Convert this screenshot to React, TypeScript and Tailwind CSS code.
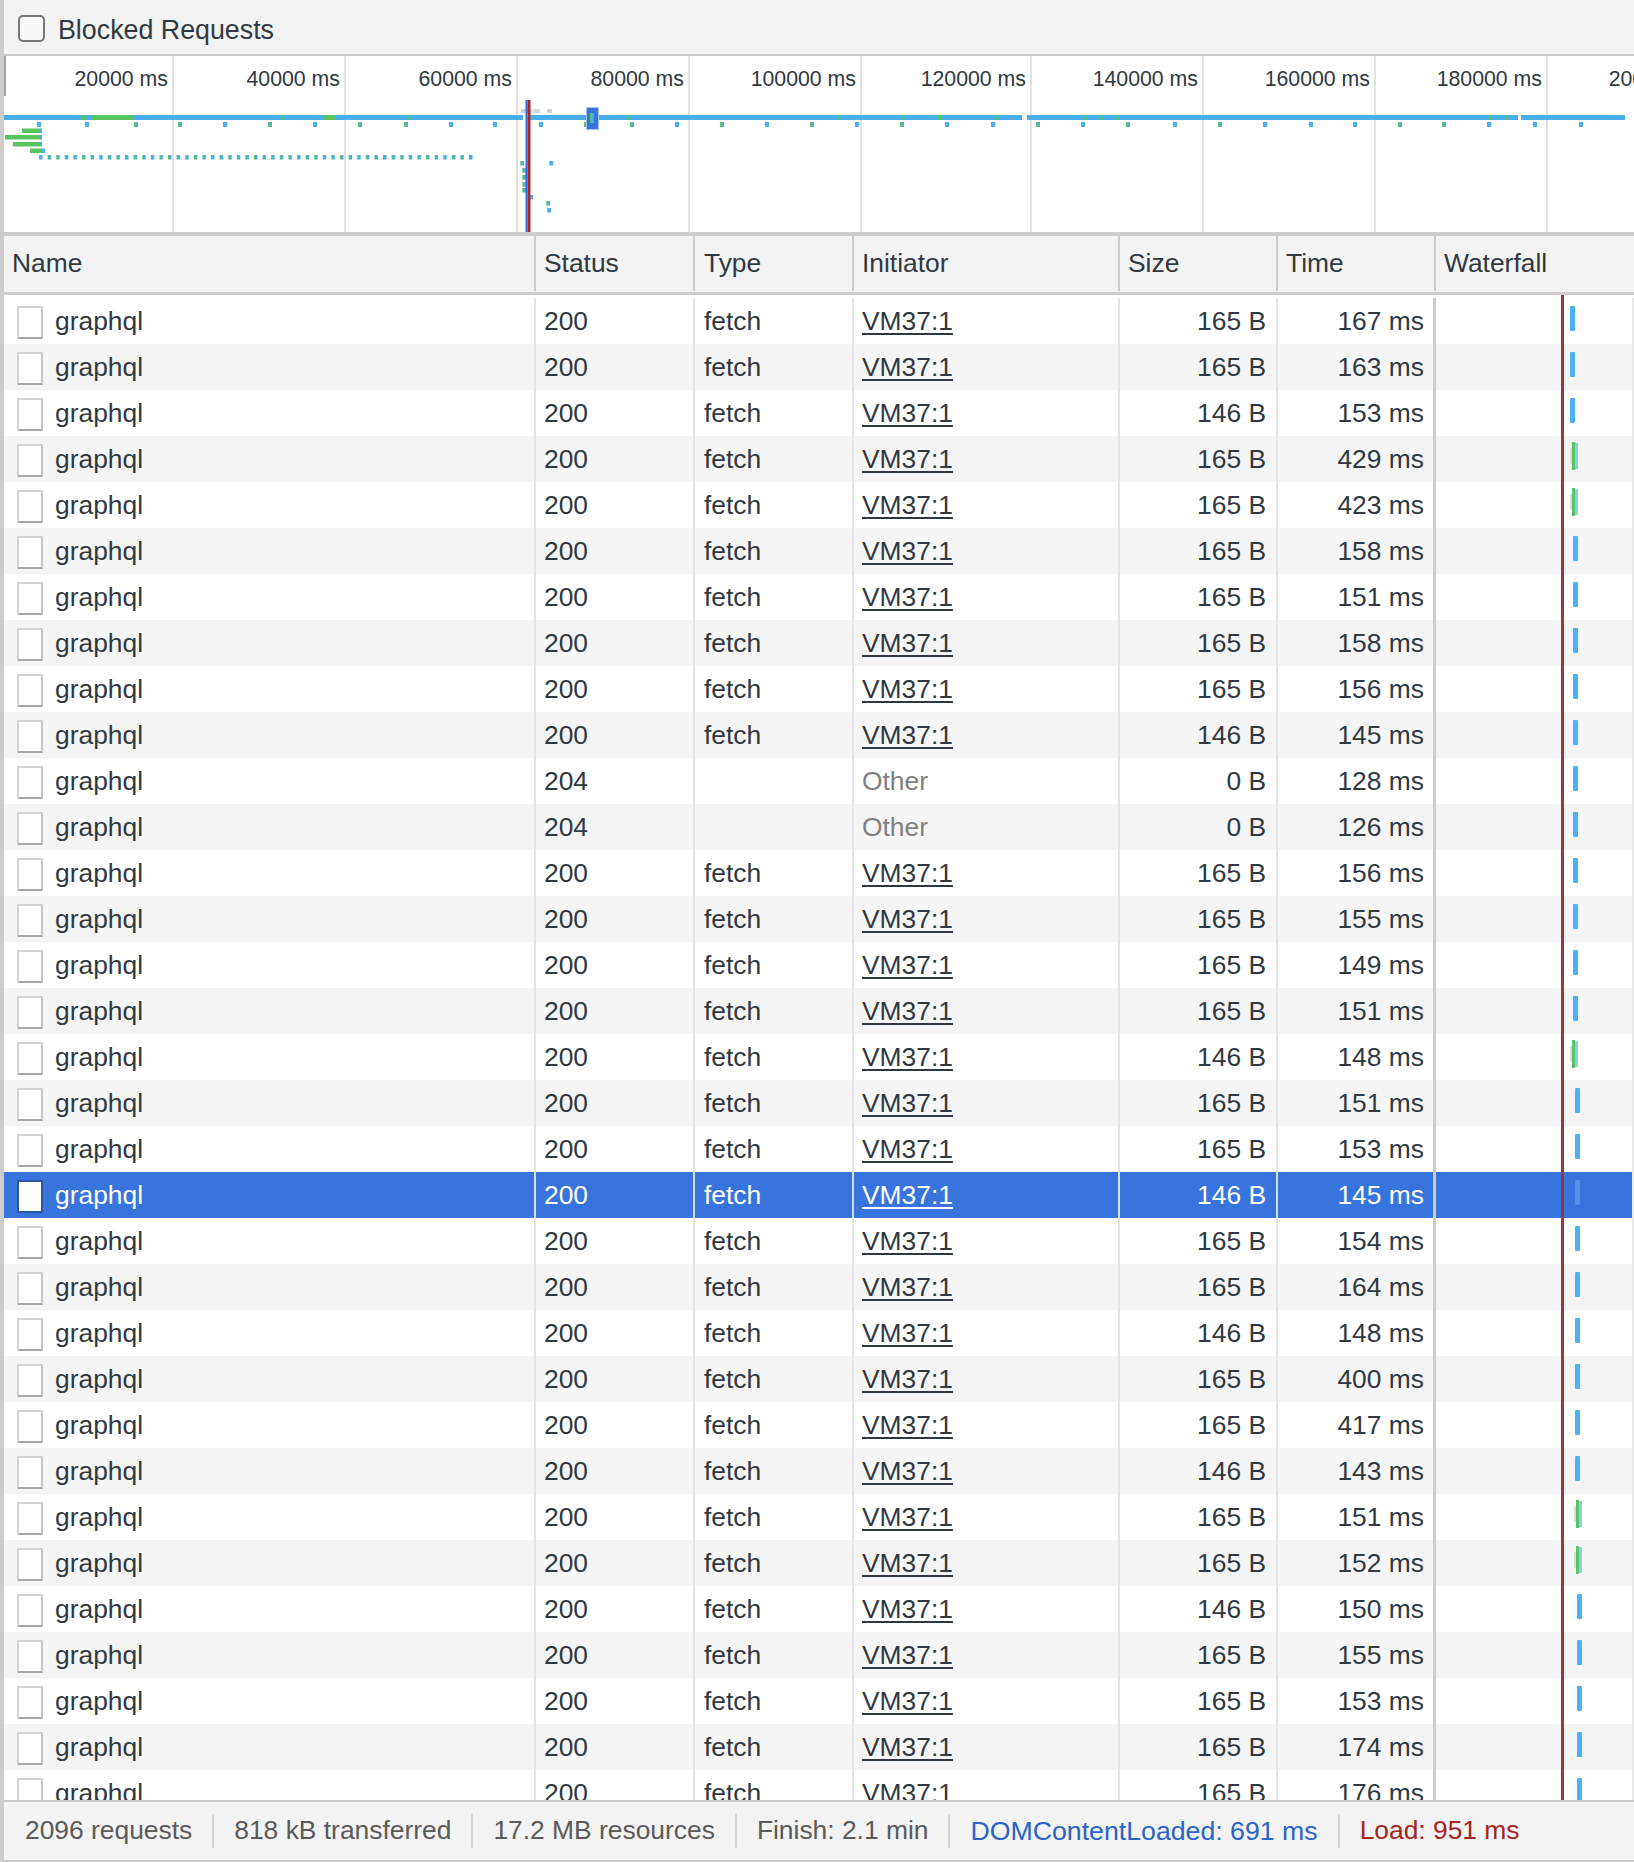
const TICKS = ['20000 ms', '40000 ms', '60000 ms', '80000 ms', '100000 ms', '120000 ms', '140000 ms', '160000 ms', '180000 ms', '200000 ms'];

// [status, size, time] for each request, top to bottom
const ROWS: [number, string, number][] = [
  [200, '165 B', 167], [200, '165 B', 163], [200, '146 B', 153], [200, '165 B', 429], [200, '165 B', 423],
  [200, '165 B', 158], [200, '165 B', 151], [200, '165 B', 158], [200, '165 B', 156], [200, '146 B', 145],
  [204, '0 B', 128], [204, '0 B', 126], [200, '165 B', 156], [200, '165 B', 155], [200, '165 B', 149],
  [200, '165 B', 151], [200, '146 B', 148], [200, '165 B', 151], [200, '165 B', 153], [200, '146 B', 145],
  [200, '165 B', 154], [200, '165 B', 164], [200, '146 B', 148], [200, '165 B', 400], [200, '165 B', 417],
  [200, '146 B', 143], [200, '165 B', 151], [200, '165 B', 152], [200, '146 B', 150], [200, '165 B', 155],
  [200, '165 B', 153], [200, '165 B', 174], [200, '165 B', 176],
];

const SELECTED = 19;
const GREEN_ROWS = [3, 4, 16, 26, 27];

// left of the waterfall bar inside its cell
function barLeft(i: number) {
  if (i < 3) return 134;
  if (i < 17) return 137;
  if (i < 26) return 139;
  return 141;
}

const BLUE = '#4aaeee';
const GREEN = '#58c45e';

const BAR_SEGMENTS = [[4, 523], [530, 1022], [1027, 1518], [1521, 1625]];
const BAR_GREEN: [number, number][] = [
  [82, 3], [92, 41], [225, 1], [281, 2], [324, 11], [361, 1], [408, 1], [473, 1], [531, 1], [579, 1], [607, 1], [628, 1],
  [838, 1], [855, 1], [902, 1], [938, 3], [996, 1], [1084, 1], [1100, 1], [1103, 1], [1116, 1], [1129, 1], [1175, 1],
  [1311, 1], [1353, 1], [1391, 1], [1490, 1], [1505, 3], [1535, 1], [1557, 1], [1591, 1],
];
const DASHES = [39, 87, 136, 180, 225, 270, 315, 360, 406, 451, 495, 541, 586, 632, 677, 722, 767, 812, 857, 902, 947, 993, 1038, 1083, 1128, 1175, 1220, 1265, 1311, 1355, 1400, 1444, 1489, 1535, 1581];
const DOTS = Array.from({ length: 51 }, (_, i) => 39 + i * 8.6);
const LOWER_DOTS = [[520, 161], [549, 161], [522, 168], [522, 175], [522, 182], [522, 188], [529, 195], [546, 201], [547, 208]];

function Overview() {
  return (
    <div className="relative h-[176px] bg-white">
      <div className="flex h-full text-[21.3px] leading-none text-[#303942]">
        {TICKS.map((t, i) => (
          <div
            key={t}
            className={`shrink-0 h-full border-r-2 border-[#e1e1e1] pr-[4px] pt-[13px] text-right whitespace-nowrap ${
              i === 0 ? 'w-[170px]' : i === 5 ? 'w-[170px]' : 'w-[172px]'
            }`}
          >
            {t}
          </div>
        ))}
      </div>
      <div className="absolute left-[-2px] top-0 h-[40px] w-[4px] bg-[#a3a3a3]" />
      {/* y in this chart is page y, so shift by the 56px above it */}
      <svg className="absolute left-[-4px] top-[-56px]" width="1634" height="232">
        {BAR_SEGMENTS.map(([a, b]) => (
          <rect key={a} x={a} y={115} width={b - a} height={5} fill={BLUE} />
        ))}
        {BAR_GREEN.map(([x, w]) => (
          <rect key={x} x={x} y={115} width={w} height={5} fill={GREEN} />
        ))}
        {DASHES.map(x => (
          <g key={x}>
            <rect x={x - 2} y={122} width={2} height={5} fill={GREEN} />
            <rect x={x - 1} y={122} width={3} height={5} fill={BLUE} />
          </g>
        ))}
        <rect x={22} y={128.5} width={18} height={4.5} fill={GREEN} />
        <rect x={40} y={128.5} width={2} height={4.5} fill={BLUE} />
        <rect x={5} y={135} width={34} height={4.5} fill={GREEN} />
        <rect x={39} y={135} width={3} height={4.5} fill={BLUE} />
        <rect x={13} y={142} width={26} height={4.5} fill={GREEN} />
        <rect x={39} y={142} width={3} height={4.5} fill={BLUE} />
        <rect x={30} y={148.5} width={12} height={4.5} fill={GREEN} />
        <rect x={42} y={148.5} width={3} height={4.5} fill={BLUE} />
        {DOTS.map(x => (
          <g key={x}>
            <rect x={x} y={155} width={1.5} height={4.5} fill={GREEN} />
            <rect x={x + 1} y={155} width={2.5} height={4.5} fill={BLUE} />
          </g>
        ))}
        {LOWER_DOTS.map(([x, y]) => (
          <g key={y + '-' + x}>
            <rect x={x} y={y} width={2} height={4.5} fill={GREEN} opacity={0.7} />
            <rect x={x + 1} y={y} width={3} height={4.5} fill={BLUE} />
          </g>
        ))}
        <rect x={521} y={109} width={11} height={4} fill="#d0d0d0" />
        <rect x={533} y={109} width={7} height={4} fill="#d8d8d8" />
        <rect x={547} y={109} width={5} height={4} fill="#d0d0d0" />
        <rect x={525.5} y={100} width={2} height={132} fill="#2f6bd0" />
        <rect x={527.5} y={100} width={3} height={132} fill="#a8282a" />
        <rect x={586.5} y={107.5} width={12} height={22} fill="#3874de" stroke="#a9c4f0" />
        <rect x={590} y={113} width={2} height={10} fill={GREEN} />
        <rect x={592} y={113} width={2} height={10} fill={BLUE} />
      </svg>
    </div>
  );
}

function HeaderCell({ label, className }: { label: string; className: string }) {
  return <div className={`shrink-0 flex items-center h-full border-r-2 border-[#cccccc] ${className}`}>{label}</div>;
}

function FileIcon({ selected }: { selected: boolean }) {
  return (
    <div
      className={`shrink-0 w-[26px] h-[33px] mt-[1px] bg-white border-2 rounded-[1px] ${
        selected ? 'border-[#2b56a6]' : 'border-[#d4d4d4] border-b-[#a8a8a8] border-r-[#c4c4c4]'
      }`}
    />
  );
}

function Row({ row, index }: { row: [number, string, number]; index: number }) {
  const [status, size, time] = row;
  const selected = index === SELECTED;
  const green = GREEN_ROWS.includes(index);
  const other = status === 204;
  const bg = selected ? 'bg-[#3874de] text-white' : index % 2 === 1 ? 'bg-[#f5f5f5] text-[#303942]' : 'bg-white text-[#303942]';
  const sep = selected ? 'border-[#d5e0f5]' : 'border-[#e4e4e4]';

  return (
    <div className={`flex h-[46px] text-[26.4px] ${bg}`}>
      <div className={`shrink-0 w-[532px] h-full flex items-center gap-[12px] pl-[13px] pt-[2px] border-r-2 ${sep}`}>
        <FileIcon selected={selected} />
        <span>graphql</span>
      </div>
      <div className={`shrink-0 w-[159px] h-full flex items-center pl-[8px] pt-[2px] border-r-2 ${sep}`}>{status}</div>
      <div className={`shrink-0 w-[159px] h-full flex items-center pl-[9px] pt-[2px] border-r-2 ${sep}`}>{other ? '' : 'fetch'}</div>
      <div className={`shrink-0 w-[266px] h-full flex items-center pl-[8px] pt-[2px] border-r-2 ${sep}`}>
        {other ? (
          <span className="text-[#808080]">Other</span>
        ) : (
          <span className="underline decoration-2 underline-offset-[3px]">VM37:1</span>
        )}
      </div>
      <div className={`shrink-0 w-[158px] h-full flex items-center justify-end pr-[10px] pt-[2px] border-r-2 ${sep}`}>{size}</div>
      <div className="shrink-0 w-[158px] h-full flex items-center justify-end pr-[9px] pt-[2px] border-r-[3px] border-[#cccccc]">{time} ms</div>
      <div className="relative grow h-full border-r-2 border-[#e8e8e8]">
        {green ? (
          <div className="absolute top-[6px] h-[28px] flex" style={{ left: barLeft(index) - 3 }}>
            <div className="w-[2px] h-[16px] mt-[6px] bg-[#dddddd]" />
            <div className="w-[3px] h-full bg-[#58c45e]" />
            <div className="w-[3px] h-[26px] mt-[1px] bg-[#8ecdf7]" />
          </div>
        ) : (
          <div
            className={`absolute top-[8px] w-[5px] h-[25px] rounded-[1px] ${selected ? 'bg-[#4f95ea]' : 'bg-[#4db2f5]'}`}
            style={{ left: barLeft(index) }}
          />
        )}
      </div>
    </div>
  );
}

function Sep() {
  return <div className="w-[2px] h-[34px] bg-[#d4d4d4] mx-[20px]" />;
}

export default function App() {
  return (
    <div className="w-[1634px] h-[1862px] overflow-hidden border-l-4 border-[#cccccc] bg-[#f3f3f3] flex flex-col text-[26.4px] text-[#303942] font-['Liberation_Sans',Arial,sans-serif]">
      <div className="shrink-0 h-[56px] flex items-center gap-[13px] pl-[14px] pt-[2px] border-b-2 border-[#cccccc] bg-[#f3f3f3]">
        <div className="w-[27px] h-[27px] rounded-[5px] border-2 border-[#767676] bg-[#f8f8f8]" />
        <span className="text-[26.8px] pt-[4px]">Blocked Requests</span>
      </div>

      <Overview />

      <div className="shrink-0 h-[63px] flex border-t-4 border-b-[3px] border-[#cccccc] bg-[#f3f3f3] pb-[1px]">
        <HeaderCell label="Name" className="w-[532px] pl-[8px]" />
        <HeaderCell label="Status" className="w-[159px] pl-[8px]" />
        <HeaderCell label="Type" className="w-[159px] pl-[9px]" />
        <HeaderCell label="Initiator" className="w-[266px] pl-[8px]" />
        <HeaderCell label="Size" className="w-[158px] pl-[8px]" />
        <HeaderCell label="Time" className="w-[158px] pl-[8px]" />
        <div className="flex items-center pl-[8px]">Waterfall</div>
      </div>

      <div className="relative h-[1505px] shrink-0 overflow-hidden pt-[3px] bg-white">
        {ROWS.map((row, i) => (
          <Row key={i} row={row} index={i} />
        ))}
        <div className="absolute left-[1557px] top-0 bottom-0 w-[3px] bg-[#9b3540]" />
      </div>

      <div className="shrink-0 h-[62px] flex items-center pl-[21px] border-t-2 border-b-2 border-[#cccccc] bg-[#f3f3f3] text-[#5a5a5a] whitespace-nowrap">
        <span>2096 requests</span>
        <Sep />
        <span>818 kB transferred</span>
        <Sep />
        <span>17.2 MB resources</span>
        <Sep />
        <span>Finish: 2.1 min</span>
        <Sep />
        <span className="text-[26.7px] text-[#2a63c8]">DOMContentLoaded: 691 ms</span>
        <Sep />
        <span className="text-[#a6241b]">Load: 951 ms</span>
      </div>
    </div>
  );
}
